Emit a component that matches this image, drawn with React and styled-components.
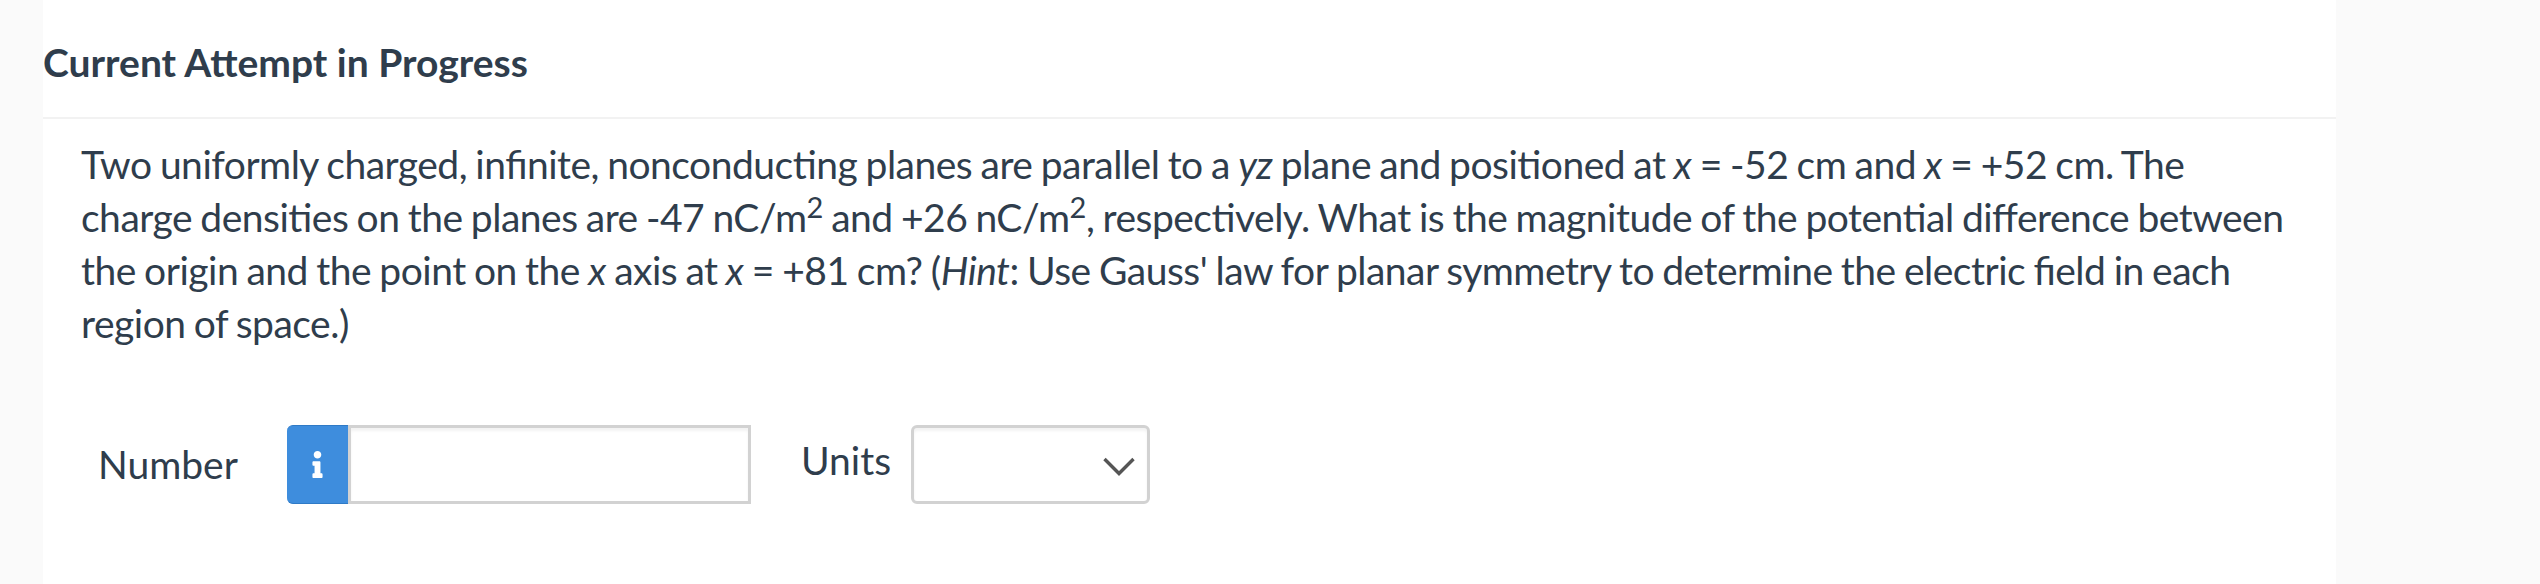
import React from 'react'
import styled, { createGlobalStyle } from 'styled-components'
import { FaInfo } from 'react-icons/fa'

const GlobalStyle = createGlobalStyle`
  html, body {
    margin: 0;
    padding: 0;
    background: #fafafa;
  }
  body {
    font-family: Lato, "Open Sans", sans-serif;
    color: #2f3d4c;
  }
`

function App() {
  return (
    <Page>
      <GlobalStyle />
      <Card>
        <Heading>Current Attempt in Progress</Heading>
        <Question>
          Two uniformly charged, infinite, nonconducting planes are parallel to a <em>yz</em> plane and
          positioned at <em>x</em> = -52 cm and <em>x</em> = +52 cm. The charge densities on the planes
          are -47 nC/m<sup>2</sup> and +26 nC/m<sup>2</sup>, respectively. What is the magnitude of the
          potential difference between the origin and the point on the <em>x</em> axis at <em>x</em> = +81
          cm? (<em>Hint</em>: Use Gauss' law for planar symmetry to determine the electric field in each
          region of space.)
        </Question>
        <AnswerRow>
          <NumberLabel>Number</NumberLabel>
          <InfoButton>
            <FaInfo size={27} />
          </InfoButton>
          <NumberInput type="text" />
          <UnitsLabel>Units</UnitsLabel>
          <UnitsSelect>
            <svg width="32" height="19" viewBox="0 0 32 19" fill="none">
              <path d="M1.5 2 L16 16.5 L30.5 2" stroke="#555" strokeWidth="3.4" />
            </svg>
          </UnitsSelect>
        </AnswerRow>
      </Card>
    </Page>
  )
}

export default App

const Page = styled.div`
  width: 2540px;
  height: 584px;
  overflow: hidden;
  padding-left: 43px;
  box-sizing: border-box;
`

const Card = styled.div`
  width: 2293px;
  height: 584px;
  background: #fff;
`

const Heading = styled.h2`
  margin: 0;
  height: 119px;
  box-sizing: border-box;
  padding-top: 40px;
  font-size: 39px;
  line-height: 44px;
  font-weight: 700;
  border-bottom: 2px solid #f2f2f2;
`

const Question = styled.p`
  margin: 0;
  padding: 19px 46px 0 38px;
  font-size: 39px;
  line-height: 53px;
  font-weight: 400;
  letter-spacing: -0.5px;
  word-spacing: -1.2px;
  font-feature-settings: "liga" 1;
  font-variant-ligatures: common-ligatures;

  em {
    font-style: italic;
  }

  sup {
    font-size: 29px;
    line-height: 0;
  }
`

const AnswerRow = styled.div`
  display: flex;
  align-items: center;
  margin-top: 75px;
  padding-left: 55px;
  height: 79px;
`

const NumberLabel = styled.label`
  font-size: 39px;
  line-height: 46px;
  width: 189px;
  position: relative;
  top: -1px;
`

const InfoButton = styled.div`
  width: 61px;
  height: 79px;
  box-sizing: border-box;
  display: flex;
  align-items: center;
  justify-content: center;
  background: #3e8ddd;
  color: #fff;
  border-radius: 6px 0 0 6px;
  border-top: 1px solid #2f7ac6;
  border-bottom: 1px solid #2f7ac6;
`

const NumberInput = styled.input`
  width: 403px;
  height: 79px;
  box-sizing: border-box;
  border: 3px solid #d2d2d2;
  border-radius: 0;
  padding: 0 12px;
  background: #fff;
  box-shadow: inset 0 3px 3px rgba(0, 0, 0, 0.05);
  outline: none;
`

const UnitsLabel = styled.label`
  font-size: 39px;
  line-height: 46px;
  margin-left: 50px;
  width: 110px;
  position: relative;
  top: -5px;
`

const UnitsSelect = styled.div`
  width: 239px;
  height: 79px;
  box-sizing: border-box;
  display: flex;
  align-items: center;
  justify-content: flex-end;
  padding: 4px 12px 0 0;
  border: 3px solid #d2d2d2;
  border-radius: 6px;
  background: #fff;
  box-shadow: inset 0 3px 3px rgba(0, 0, 0, 0.05);
`
